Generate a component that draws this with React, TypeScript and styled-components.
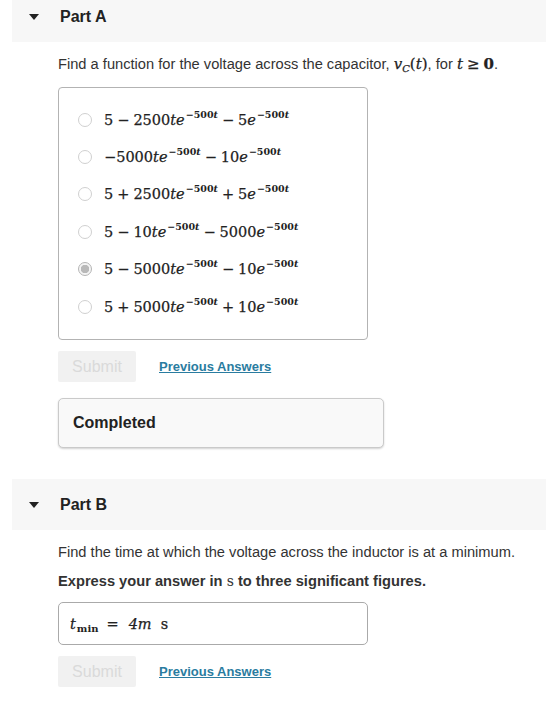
import React from 'react'
import styled, { createGlobalStyle } from 'styled-components'

const GlobalStyle = createGlobalStyle`
  body {
    margin: 0;
    background: #fff;
    font-family: 'Liberation Sans', Arial, sans-serif;
    color: #333;
  }
`

type Option = {
  lead?: string
  op1: string
  c1: string
  op2: string
  c2: string
}

const options: Option[] = [
  { lead: '5', op1: '−', c1: '2500', op2: '−', c2: '5' },
  { op1: '−', c1: '5000', op2: '−', c2: '10' },
  { lead: '5', op1: '+', c1: '2500', op2: '+', c2: '5' },
  { lead: '5', op1: '−', c1: '10', op2: '−', c2: '5000' },
  { lead: '5', op1: '−', c1: '5000', op2: '−', c2: '10' },
  { lead: '5', op1: '+', c1: '5000', op2: '+', c2: '10' },
]

const selectedIndex = 4

function Exp() {
  return (
    <Sup>
      −500<I>t</I>
    </Sup>
  )
}

function Formula({ lead, op1, c1, op2, c2 }: Option) {
  return (
    <MathText>
      {lead && (
        <>
          {lead}
          <Op>{op1}</Op>
        </>
      )}
      {!lead && op1}
      {c1}
      <I>te</I>
      <Exp />
      <Op>{op2}</Op>
      {c2}
      <I>e</I>
      <Exp />
    </MathText>
  )
}

function PartHeader({ title }: { title: string }) {
  return (
    <Header>
      <Caret />
      <HeaderTitle>{title}</HeaderTitle>
    </Header>
  )
}

function SubmitRow() {
  return (
    <ActionRow>
      <SubmitButton disabled>Submit</SubmitButton>
      <PrevLink href="#">Previous Answers</PrevLink>
    </ActionRow>
  )
}

export default function App() {
  return (
    <Page>
      <GlobalStyle />
      <PartHeader title="Part A" />
      <PartBody>
        <Prompt>
          Find a function for the voltage across the capacitor,{' '}
          <InlineMath>
            <I>v</I>
            <Sub>
              <I>C</I>
            </Sub>
            (<I>t</I>)
          </InlineMath>
          , for{' '}
          <InlineMath>
            <I>t</I>
            <Op>≥</Op>
            <b>0</b>
          </InlineMath>
          .
        </Prompt>
        <OptionsBox>
          {options.map((o, i) => (
            <OptionRow key={i}>
              <Radio checked={i === selectedIndex} />
              <Formula {...o} />
            </OptionRow>
          ))}
        </OptionsBox>
        <SubmitRow />
        <Completed>Completed</Completed>
      </PartBody>

      <Spacer />

      <PartHeader title="Part B" />
      <PartBody>
        <Prompt>Find the time at which the voltage across the inductor is at a minimum.</Prompt>
        <Instruction>
          Express your answer in <Unit>s</Unit> to three significant figures.
        </Instruction>
        <AnswerBox>
          <MathText>
            <I>t</I>
            <SubLabel>min</SubLabel>
            <EqOp>=</EqOp>
            <I>4m</I>
            <UnitGap>s</UnitGap>
          </MathText>
        </AnswerBox>
        <SubmitRow />
      </PartBody>
    </Page>
  )
}

const Page = styled.div`
  margin-top: -9px;
  padding-left: 12px;
  padding-bottom: 20px;
`

const Header = styled.div`
  display: flex;
  align-items: center;
  height: 51px;
  background: #f7f7f7;
  padding-left: 17px;
`

const Caret = styled.span`
  width: 0;
  height: 0;
  border-left: 5px solid transparent;
  border-right: 5px solid transparent;
  border-top: 6px solid #222;
  margin-right: 21px;
`

const HeaderTitle = styled.div`
  font-size: 16px;
  font-weight: bold;
  color: #222;
  margin-top: 1px;
`

const PartBody = styled.div`
  padding-left: 46px;
  padding-top: 12px;
`

const Prompt = styled.p`
  margin: 0 0 13px;
  font-size: 14.67px;
  line-height: 20px;
  color: #333;
`

const Instruction = styled.p`
  margin: -4px 0 11px;
  font-size: 14.67px;
  line-height: 20px;
  font-weight: bold;
  color: #333;
`

const Unit = styled.span`
  font-family: 'DejaVu Serif', 'Liberation Serif', serif;
  font-weight: normal;
  font-size: 14px;
`

const MathText = styled.span`
  font-family: 'DejaVu Serif', 'Liberation Serif', serif;
  font-size: 14.5px;
  color: #222;
  white-space: nowrap;
  -webkit-text-stroke: 0.25px #222;
`

const InlineMath = styled(MathText)`
  font-size: 15px;
`

const I = styled.i`
  font-style: italic;
`

const Op = styled.span`
  margin: 0 4px;
`

const EqOp = styled.span`
  margin: 0 10px 0 8px;
`

const Sup = styled.sup`
  font-size: 9.5px;
  font-weight: bold;
  vertical-align: 7px;
  line-height: 0;
  margin-left: 1px;
  -webkit-text-stroke: 0;
`

const Sub = styled.sub`
  font-size: 10px;
  vertical-align: -3px;
  line-height: 0;
`

const SubLabel = styled.sub`
  font-size: 10px;
  font-weight: bold;
  vertical-align: -3px;
  line-height: 0;
  margin-left: 1px;
  -webkit-text-stroke: 0;
`

const UnitGap = styled.span`
  margin-left: 9px;
`

const OptionsBox = styled.div`
  width: 310px;
  height: 253px;
  box-sizing: border-box;
  border: 1px solid #b3b3b3;
  border-radius: 4px;
  padding: 13px 0 0 19px;
`

const OptionRow = styled.div`
  display: flex;
  align-items: center;
  gap: 12px;
  height: 37.4px;
`

const Radio = styled.span<{ checked: boolean }>`
  width: 14px;
  height: 14px;
  box-sizing: border-box;
  border-radius: 50%;
  border: 1px solid ${p => (p.checked ? '#b5b5b5' : '#d0d0d0')};
  background: ${p =>
    p.checked ? 'radial-gradient(circle, #b9b9b9 0 4px, #f4f4f4 4.5px)' : '#fff'};
  flex-shrink: 0;
`

const ActionRow = styled.div`
  display: flex;
  align-items: center;
  gap: 23px;
  margin-top: 11px;
`

const SubmitButton = styled.button`
  width: 78px;
  height: 31px;
  border: none;
  border-radius: 2px;
  background: #f1f1f1;
  color: #dadada;
  font-family: 'Liberation Sans', Arial, sans-serif;
  font-size: 16px;
  padding: 0;
`

const PrevLink = styled.a`
  font-size: 13px;
  font-weight: bold;
  color: #2a7ca0;
  text-decoration: underline;
`

const Completed = styled.div`
  margin-top: 16px;
  width: 326px;
  height: 50px;
  box-sizing: border-box;
  display: flex;
  align-items: center;
  padding-left: 14px;
  background: #f9f9f9;
  border: 1px solid #cacaca;
  border-radius: 5px;
  box-shadow: 0 1px 2px rgba(0, 0, 0, 0.18);
  font-size: 16px;
  font-weight: bold;
  color: #222;
`

const Spacer = styled.div`
  height: 31px;
`

const AnswerBox = styled.div`
  width: 310px;
  height: 43px;
  box-sizing: border-box;
  display: flex;
  align-items: center;
  padding-left: 11px;
  border: 1px solid #aaa;
  border-radius: 5px;
`
